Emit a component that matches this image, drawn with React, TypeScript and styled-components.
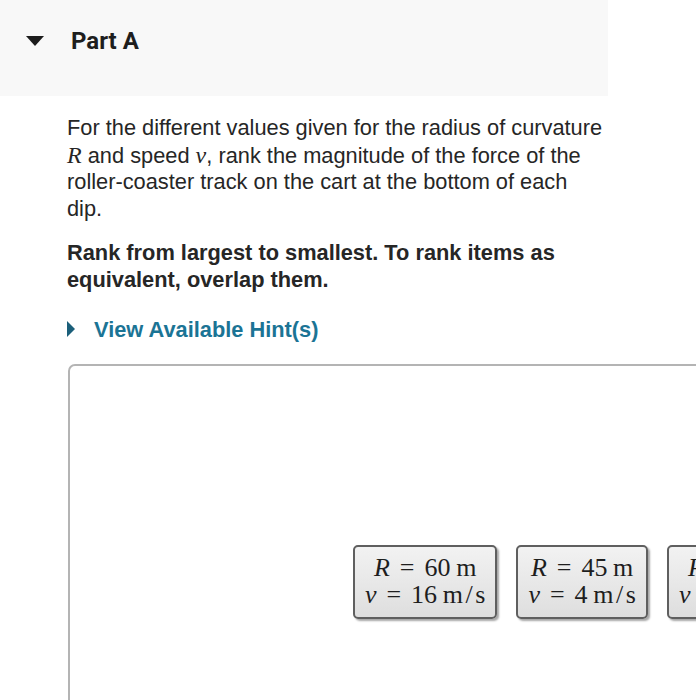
import styled, { createGlobalStyle } from 'styled-components'

const GlobalStyle = createGlobalStyle`
  html, body {
    margin: 0;
    padding: 0;
    background: #ffffff;
    overflow: hidden;
  }
  body {
    font-family: 'Liberation Sans', Arial, sans-serif;
    color: #222;
  }
`

interface Item {
  r: number
  v: number
}

const items: Item[] = [
  { r: 60, v: 16 },
  { r: 45, v: 4 },
  { r: 30, v: 12 },
]

export default function App() {
  return (
    <Page>
      <GlobalStyle />
      <Header>
        <Caret />
        <Title>Part A</Title>
      </Header>

      <Body>
        <Prompt>
          For the different values given for the radius of curvature <MathVar>R</MathVar> and speed{' '}
          <MathVar>v</MathVar>, rank the magnitude of the force of the roller-coaster track on the cart at the
          bottom of each dip.
        </Prompt>
        <Instruction>Rank from largest to smallest. To rank items as equivalent, overlap them.</Instruction>

        <HintLink>
          <HintCaret />
          View Available Hint(s)
        </HintLink>

        <RankArea>
          <CardRow>
            {items.map((item) => (
              <Card key={item.r}>
                <MathLine>
                  <i>R</i>
                  <Eq>=</Eq>
                  {item.r}
                  <Unit>m</Unit>
                </MathLine>
                <MathLine>
                  <i>v</i>
                  <Eq>=</Eq>
                  {item.v}
                  <Unit>
                    m<Slash>/</Slash>s
                  </Unit>
                </MathLine>
              </Card>
            ))}
          </CardRow>
        </RankArea>
      </Body>
    </Page>
  )
}

const Page = styled.div`
  width: 696px;
  height: 700px;
  overflow: hidden;
`

const Header = styled.div`
  width: 608px;
  height: 96px;
  background: #f8f8f8;
  display: flex;
  align-items: center;
  box-sizing: border-box;
  padding: 0 0 14px 26px;
`

const Caret = styled.span`
  width: 0;
  height: 0;
  border-left: 9px solid transparent;
  border-right: 9px solid transparent;
  border-top: 10px solid #1c1c1c;
  margin-right: 27px;
`

const Title = styled.h2`
  margin: 0;
  font-family: Roboto, 'Liberation Sans', sans-serif;
  font-weight: 700;
  font-size: 24px;
  color: #1e1e1e;
`

const Body = styled.div`
  padding: 19px 0 0 67px;
`

const Prompt = styled.p`
  margin: 0;
  width: 538px;
  font-size: 21.8px;
  line-height: 26.7px;
  color: #262626;
`

const MathVar = styled.i`
  font-family: 'Liberation Serif', 'Times New Roman', serif;
  font-size: 24px;
`

const Instruction = styled.p`
  margin: 16px 0 0;
  width: 538px;
  font-size: 21.8px;
  line-height: 27px;
  font-weight: 700;
  color: #262626;
`

const HintLink = styled.a`
  display: flex;
  align-items: center;
  margin-top: 23px;
  font-size: 21.8px;
  line-height: 27px;
  font-weight: 700;
  color: #1b7495;
  cursor: pointer;
`

const HintCaret = styled.span`
  width: 0;
  height: 0;
  border-top: 8px solid transparent;
  border-bottom: 8px solid transparent;
  border-left: 8px solid #1b5f7a;
  margin-right: 19px;
`

const RankArea = styled.div`
  margin-top: 21px;
  margin-left: 1px;
  width: 720px;
  height: 400px;
  border: 2px solid #b4b4b4;
  border-radius: 7px;
  box-sizing: border-box;
`

const CardRow = styled.div`
  display: flex;
  align-items: flex-start;
  gap: 19px;
  padding: 179px 0 0 283px;
`

const Card = styled.div`
  flex: none;
  padding: 7px 10px 9px;
  border: 2px solid #5f5f5f;
  border-radius: 5px;
  background: linear-gradient(#f2f2f2, #dedede);
  box-shadow: 2px 2px 2px rgba(0, 0, 0, 0.35);
  font-family: 'Liberation Serif', 'Times New Roman', serif;
  font-size: 26px;
  line-height: 27px;
  text-align: center;
  color: #1e1e1e;
`

const MathLine = styled.div`
  white-space: nowrap;
`

const Eq = styled.span`
  margin: 0 0.38em;
`

const Unit = styled.span`
  margin-left: 0.22em;
`

const Slash = styled.span`
  margin: 0 0.1em;
`
